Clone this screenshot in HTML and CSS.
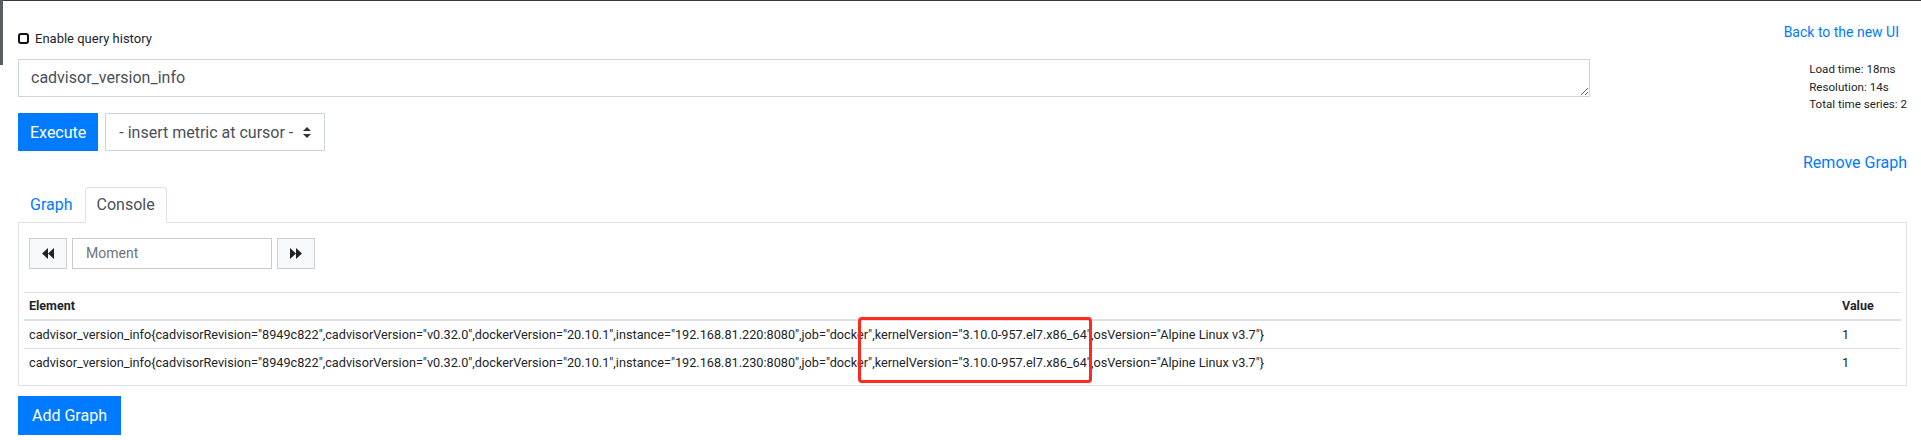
FILE: index.html
```html
<!DOCTYPE html>
<html>
<head>
<meta charset="utf-8">
<link rel="stylesheet" href="styles.css">
</head>
<body>
<div class="edge"></div>
<div class="topline"></div>
<div class="page">
  <div class="header">
    <label class="history"><span class="check"></span>Enable query history</label>
    <a class="link back" href="#">Back to the new UI</a>
  </div>
  <div class="graph-row">
    <div class="query-col">
      <textarea class="expr">cadvisor_version_info</textarea>
      <div class="exec-row">
        <button class="btn-primary">Execute</button>
        <div class="select">
          <span>- insert metric at cursor -</span>
          <svg class="updown" width="8" height="11" viewBox="0 0 8 11"><polygon points="4,0 8,4 0,4" fill="#333"/><polygon points="0,7 8,7 4,11" fill="#333"/></svg>
        </div>
      </div>
    </div>
    <div class="side-col">
      <div class="stats">
        <div>Load time: 18ms</div>
        <div>Resolution: 14s</div>
        <div>Total time series: 2</div>
      </div>
      <a class="link remove" href="#">Remove Graph</a>
    </div>
  </div>
  <div class="tabs">
    <div class="tab">Graph</div>
    <div class="tab active">Console</div>
  </div>
  <div class="panel">
    <div class="controls">
      <button class="btn-light"><svg width="12" height="11" viewBox="0 0 12 11"><polygon points="6,0 6,11 0,5.5" fill="#222"/><polygon points="12,0 12,11 6,5.5" fill="#222"/></svg></button>
      <input class="moment" placeholder="Moment">
      <button class="btn-light"><svg width="12" height="11" viewBox="0 0 12 11"><polygon points="0,0 6,5.5 0,11" fill="#222"/><polygon points="6,0 12,5.5 6,11" fill="#222"/></svg></button>
    </div>
    <div class="table-wrap">
      <table class="results">
        <thead>
          <tr><th>Element</th><th class="val">Value</th></tr>
        </thead>
        <tbody>
          <tr><td>cadvisor_version_info{cadvisorRevision="8949c822",cadvisorVersion="v0.32.0",dockerVersion="20.10.1",instance="192.168.81.220:8080",job="docker",kernelVersion="3.10.0-957.el7.x86_64",osVersion="Alpine Linux v3.7"}</td><td class="val">1</td></tr>
          <tr><td>cadvisor_version_info{cadvisorRevision="8949c822",cadvisorVersion="v0.32.0",dockerVersion="20.10.1",instance="192.168.81.230:8080",job="docker",kernelVersion="3.10.0-957.el7.x86_64",osVersion="Alpine Linux v3.7"}</td><td class="val">1</td></tr>
        </tbody>
      </table>
      <div class="highlight"></div>
    </div>
  </div>
  <button class="btn-primary add">Add Graph</button>
</div>
</body>
</html>
```
FILE: styles.css
```css
* { box-sizing: border-box; }
html, body { margin: 0; padding: 0; background: #fff; }
body {
  font-family: Roboto, "Noto Sans", "Liberation Sans", sans-serif;
  color: #212529;
  position: relative;
}
.edge {
  position: absolute;
  left: 0; top: 0;
  width: 3px; height: 65px;
  background: #5a5d61;
}
.topline { height: 1px; background: #343a40; margin-left: 3px; }
.page { padding: 0 14px 0 18px; }
.header {
  display: flex;
  justify-content: space-between;
  align-items: flex-start;
  padding-top: 22px;
  padding-right: 8px;
  height: 58px;
}
.history {
  display: flex;
  align-items: center;
  margin-top: 8px;
  font-size: 13px;
  line-height: 15px;
}
.check {
  width: 11px; height: 11px;
  border: 2px solid #111;
  border-radius: 3px;
  margin-right: 6px;
}
.link { color: #007bff; text-decoration: none; }
.back { font-size: 14px; line-height: 18px; }
.graph-row { display: flex; justify-content: space-between; }
.query-col { width: 1572px; }
.expr {
  display: block;
  width: 100%;
  height: 38px;
  border: 1px solid #ced4da;
  border-radius: 0;
  padding: 7px 12px;
  font-family: inherit;
  font-size: 16px;
  line-height: 22px;
  color: #495057;
  resize: vertical;
  outline: none;
}
.exec-row { display: flex; gap: 7px; margin-top: 16px; }
.btn-primary {
  background: #007bff;
  color: #fff;
  border: 1px solid #007bff;
  border-radius: 0;
  font-family: inherit;
  font-size: 16px;
  height: 38px;
  padding: 0 11px;
}
.select {
  width: 220px;
  height: 38px;
  border: 1px solid #ced4da;
  display: flex;
  align-items: center;
  justify-content: space-between;
  padding: 0 13px 0 13px;
  font-size: 16px;
  color: #495057;
}
.side-col {
  display: flex;
  flex-direction: column;
  align-items: flex-end;
  padding-top: 2px;
}
.stats { font-size: 11.6px; line-height: 17.5px; }
.remove { font-size: 16px; line-height: 20px; margin-top: 39px; }
.tabs {
  display: flex;
  margin-top: 14px;
  border-bottom: 1px solid #dee2e6;
}
.tab {
  height: 36px;
  line-height: 34px;
  padding: 0 11px;
  font-size: 16px;
  color: #007bff;
  border: 1px solid transparent;
  border-top-left-radius: 4px;
  border-top-right-radius: 4px;
  margin-bottom: -1px;
}
.tab.active {
  color: #495057;
  border-color: #dee2e6 #dee2e6 #fff;
  background: #fff;
}
.panel {
  border: 1px solid #dee2e6;
  border-top: none;
  padding: 15px 5px 9px 5px;
}
.controls { display: flex; gap: 5px; margin-left: 5px; }
.btn-light {
  width: 38px; height: 31px;
  background: #f8f9fa;
  border: 1px solid #ccc;
  border-radius: 0;
  display: flex; align-items: center; justify-content: center;
  padding: 0;
}
.moment {
  width: 200px; height: 31px;
  border: 1px solid #ccc;
  padding: 0 13px;
  font-family: inherit;
  font-size: 14px;
  outline: none;
}
.moment::placeholder { color: #6c757d; }
.table-wrap { position: relative; margin-top: 23px; }
.results { width: 100%; border-collapse: collapse; font-size: 12.7px; }
.results th {
  text-align: left;
  font-weight: bold;
  font-size: 12.5px;
  height: 28px;
  padding: 0 5px;
  border-top: 1px solid #dee2e6;
  border-bottom: 2px solid #dee2e6;
}
.results td {
  height: 28px;
  padding: 0 5px;
  border-top: 1px solid #dee2e6;
  white-space: nowrap;
}
.results .val { width: 64px; }
.highlight {
  position: absolute;
  left: 834px; top: 25px;
  width: 234px; height: 66px;
  border: 3px solid #ff2a1f;
  border-radius: 4px;
}
.add { margin-top: 10px; height: 39px; padding: 0 13px; }
```
